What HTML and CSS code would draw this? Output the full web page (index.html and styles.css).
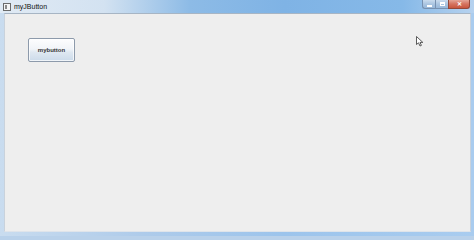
FILE: index.html
```html
<!DOCTYPE html>
<html>
<head>
<meta charset="utf-8">
<link rel="stylesheet" href="styles.css">
</head>
<body>
<div class="window">
  <div class="titlebar">
    <div class="title">
      <svg class="appicon" width="8" height="8" viewBox="0 0 8 8">
        <rect x="0.5" y="0.5" width="7" height="7" fill="#f4f4f4" stroke="#6b6b6b"/>
        <rect x="2" y="2" width="2" height="4" fill="#8a8a8a"/>
      </svg>
      <span class="title-text">myJButton</span>
    </div>
    <div class="blur"></div>
    <div class="controls">
      <div class="ctl min"><span class="bar"></span></div>
      <div class="ctl max"><span class="box"></span></div>
      <div class="ctl close"><span class="x">✕</span></div>
    </div>
  </div>
  <div class="frame">
    <div class="content">
      <button class="jbutton">mybutton</button>
      <svg class="cursor" width="8" height="11" viewBox="0 0 8 11">
        <path d="M0.5 0.5 L0.5 8.5 L2.5 6.8 L4 10 L5.4 9.4 L4 6.4 L6.8 6.4 Z" fill="#fff" stroke="#333" stroke-width="0.8"/>
      </svg>
    </div>
  </div>
</div>
</body>
</html>
```
FILE: styles.css
```css
html, body {
  margin: 0;
  padding: 0;
  width: 474px;
  height: 236px;
  overflow: hidden;
  background: #b9d1ea;
  font-family: "Liberation Sans", Arial, sans-serif;
}
.window {
  width: 474px;
  height: 236px;
  display: flex;
  flex-direction: column;
  background: linear-gradient(90deg, #c9dcef 0%, #aecbea 30%, #9cc4ec 60%, #a9ccef 100%);
}
.titlebar {
  height: 13px;
  display: flex;
  align-items: flex-start;
  position: relative;
  background: linear-gradient(90deg, #e0eaf4 0%, #d3e2f1 22%, #8dbbe6 40%, #7fb3e5 60%, #86b9e8 85%, #b6d2ef 100%);
}
.title {
  display: flex;
  align-items: center;
  gap: 3px;
  height: 11px;
  padding-left: 3px;
  padding-top: 1px;
}
.appicon { display: block; }
.title-text {
  font-size: 7px;
  color: #111;
  line-height: 8px;
}
.blur {
  flex: 1;
}
.controls {
  display: flex;
  margin-right: 4px;
  height: 9px;
}
.ctl {
  height: 9px;
  display: flex;
  align-items: center;
  justify-content: center;
  border: 1px solid #7891b0;
  border-top: none;
  box-sizing: border-box;
}
.min, .max {
  width: 13px;
  background: linear-gradient(180deg, #c9dbee 0%, #abc5e1 50%, #98b7d9 100%);
}
.min { border-radius: 0 0 0 3px; border-right: none; }
.max { border-right: none; }
.close {
  width: 22px;
  background: linear-gradient(180deg, #e4a597 0%, #d5735f 50%, #c8553e 100%);
  border-color: #94483a;
  border-radius: 0 0 3px 0;
}
.bar {
  display: block;
  width: 5px;
  height: 2px;
  background: #fff;
  margin-top: 3px;
}
.box {
  display: block;
  width: 5px;
  height: 4px;
  border: 1px solid #fff;
  border-top-width: 2px;
  box-sizing: border-box;
}
.x {
  color: #fff;
  font-size: 6px;
  font-weight: bold;
  line-height: 6px;
}
.frame {
  flex: 1;
  padding: 0 3px 4px 4px;
  display: flex;
}
.content {
  flex: 1;
  background: #eeeeee;
  border-top: 1px solid #a7b5c4;
  border-left: 1px solid #c9d2dc;
  border-right: 1px solid #c9d2dc;
  border-bottom: 1px solid #dfe4ea;
  position: relative;
  padding: 24px 0 0 23px;
  display: flex;
  align-items: flex-start;
}
.jbutton {
  width: 47px;
  height: 24px;
  margin: 0;
  padding: 0;
  border: 1px solid #8d9aab;
  border-radius: 2px;
  background: linear-gradient(180deg, #fdfdfe 0%, #f1f4f8 45%, #dfe8f1 60%, #ccdbea 100%);
  font-family: "Liberation Sans", Arial, sans-serif;
  font-size: 6px;
  font-weight: bold;
  color: #333;
  box-shadow: inset 0 0 0 1px rgba(255,255,255,0.7);
}
.cursor {
  position: absolute;
  left: 411px;
  top: 22px;
}
```
